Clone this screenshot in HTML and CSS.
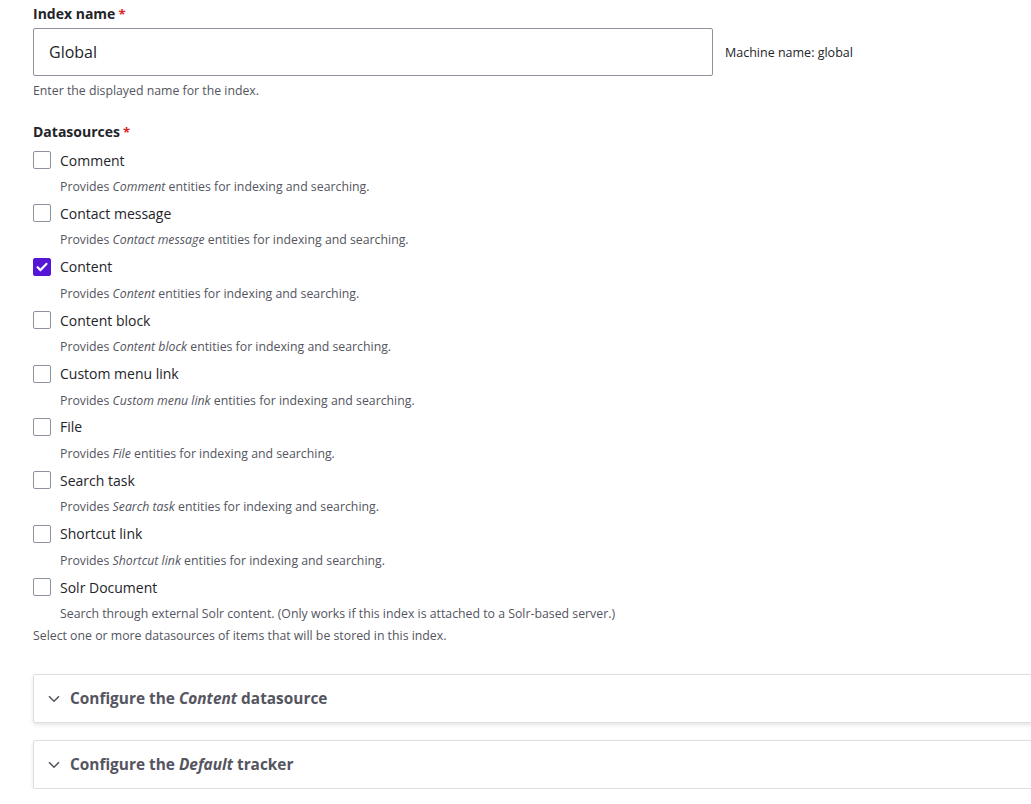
FILE: index.html
```html
<!DOCTYPE html>
<html lang="en">
<head>
<meta charset="utf-8">
<title>Index</title>
<link rel="stylesheet" href="styles.css">
</head>
<body>
<form class="form">
  <div class="form-item">
    <label class="label">Index name<span class="req">*</span></label>
    <div class="input-row">
      <input class="text-input" type="text" value="Global">
      <span class="machine">Machine name: global</span>
    </div>
    <div class="desc">Enter the displayed name for the index.</div>
  </div>

  <div class="form-item ds">
    <div class="label">Datasources<span class="req">*</span></div>
    <div class="options">
      <div class="option">
        <div class="opt-row"><span class="cb"></span><span class="opt-label">Comment</span></div>
        <div class="opt-desc">Provides <em>Comment</em> entities for indexing and searching.</div>
      </div>
      <div class="option">
        <div class="opt-row"><span class="cb"></span><span class="opt-label">Contact message</span></div>
        <div class="opt-desc">Provides <em>Contact message</em> entities for indexing and searching.</div>
      </div>
      <div class="option">
        <div class="opt-row"><span class="cb checked"><svg viewBox="0 0 18 18" width="18" height="18"><path d="M4.6 9.2l2.9 2.9 5.9-6.2" fill="none" stroke="#fff" stroke-width="2.2" stroke-linecap="round" stroke-linejoin="round"/></svg></span><span class="opt-label">Content</span></div>
        <div class="opt-desc">Provides <em>Content</em> entities for indexing and searching.</div>
      </div>
      <div class="option">
        <div class="opt-row"><span class="cb"></span><span class="opt-label">Content block</span></div>
        <div class="opt-desc">Provides <em>Content block</em> entities for indexing and searching.</div>
      </div>
      <div class="option">
        <div class="opt-row"><span class="cb"></span><span class="opt-label">Custom menu link</span></div>
        <div class="opt-desc">Provides <em>Custom menu link</em> entities for indexing and searching.</div>
      </div>
      <div class="option">
        <div class="opt-row"><span class="cb"></span><span class="opt-label">File</span></div>
        <div class="opt-desc">Provides <em>File</em> entities for indexing and searching.</div>
      </div>
      <div class="option">
        <div class="opt-row"><span class="cb"></span><span class="opt-label">Search task</span></div>
        <div class="opt-desc">Provides <em>Search task</em> entities for indexing and searching.</div>
      </div>
      <div class="option">
        <div class="opt-row"><span class="cb"></span><span class="opt-label">Shortcut link</span></div>
        <div class="opt-desc">Provides <em>Shortcut link</em> entities for indexing and searching.</div>
      </div>
      <div class="option">
        <div class="opt-row"><span class="cb"></span><span class="opt-label">Solr Document</span></div>
        <div class="opt-desc">Search through external Solr content. (Only works if this index is attached to a Solr-based server.)</div>
      </div>
    </div>
    <div class="desc ds-desc">Select one or more datasources of items that will be stored in this index.</div>
  </div>

  <div class="details">
    <div class="summary"><svg class="chev" viewBox="0 0 12 8" width="12" height="8"><path d="M1 1.2l5 5 5-5" fill="none" stroke="#545560" stroke-width="1.6"/></svg><span>Configure the <em>Content</em> datasource</span></div>
  </div>
  <div class="details">
    <div class="summary"><svg class="chev" viewBox="0 0 12 8" width="12" height="8"><path d="M1 1.2l5 5 5-5" fill="none" stroke="#545560" stroke-width="1.6"/></svg><span>Configure the <em>Default</em> tracker</span></div>
  </div>
</form>
</body>
</html>
```

FILE: styles.css
```css
html, body {
  margin: 0;
  padding: 0;
  background: #fff;
  overflow: hidden;
}
body {
  font-family: "Open Sans", "Noto Sans", sans-serif;
  color: #232429;
}
.form {
  width: 1040px;
  padding: 4px 0 0 33px;
}
.form-item {
  margin: 0;
}
.label {
  display: block;
  font-size: 14px;
  font-weight: bold;
  line-height: 20px;
  color: #232429;
  margin-bottom: 4px;
}
.req {
  color: #dc2323;
  margin-left: 3px;
  font-size: 13px;
}
.input-row {
  display: flex;
  align-items: center;
}
.text-input {
  box-sizing: border-box;
  width: 680px;
  height: 48px;
  border: 1px solid #8e929c;
  border-radius: 2px;
  padding: 0 15px;
  font-family: inherit;
  font-size: 16px;
  color: #232429;
  margin: 0;
}
.machine {
  margin-left: 12px;
  font-size: 12.5px;
  color: #232429;
}
.desc {
  font-size: 12.3px;
  line-height: 18px;
  color: #545560;
  margin-top: 6px;
}
.ds {
  margin-top: 22px;
}
.ds .label {
  margin-bottom: 8px;
}
.option {
  margin-bottom: 7.4px;
}
.option:last-child {
  margin-bottom: 0;
}
.opt-row {
  display: flex;
  align-items: center;
  height: 20px;
}
.cb {
  box-sizing: border-box;
  width: 18px;
  height: 18px;
  border: 1px solid #8e929c;
  border-radius: 2px;
  display: inline-block;
  flex: none;
}
.cb.checked {
  background: #5616d6;
  border-color: #5616d6;
  position: relative;
}
.cb.checked svg {
  position: absolute;
  left: -1px;
  top: -1px;
}
.opt-label {
  margin-left: 9px;
  font-size: 14px;
  color: #232429;
}
.opt-desc {
  margin: 8px 0 0 27px;
  font-size: 12.3px;
  line-height: 18px;
  color: #545560;
}
.ds-desc {
  margin-top: 4px;
}
.details {
  box-sizing: border-box;
  height: 49px;
  border: 1px solid #dedfe4;
  border-radius: 2px;
  box-shadow: 0 2px 4px rgba(0, 0, 0, 0.1);
  margin-top: 29px;
  width: 1010px;
}
.details + .details {
  margin-top: 17px;
}
.summary {
  display: flex;
  align-items: center;
  height: 47px;
  padding-left: 14px;
  font-size: 15.4px;
  font-weight: bold;
  color: #545560;
}
.chev {
  margin-right: 10px;
}
```
